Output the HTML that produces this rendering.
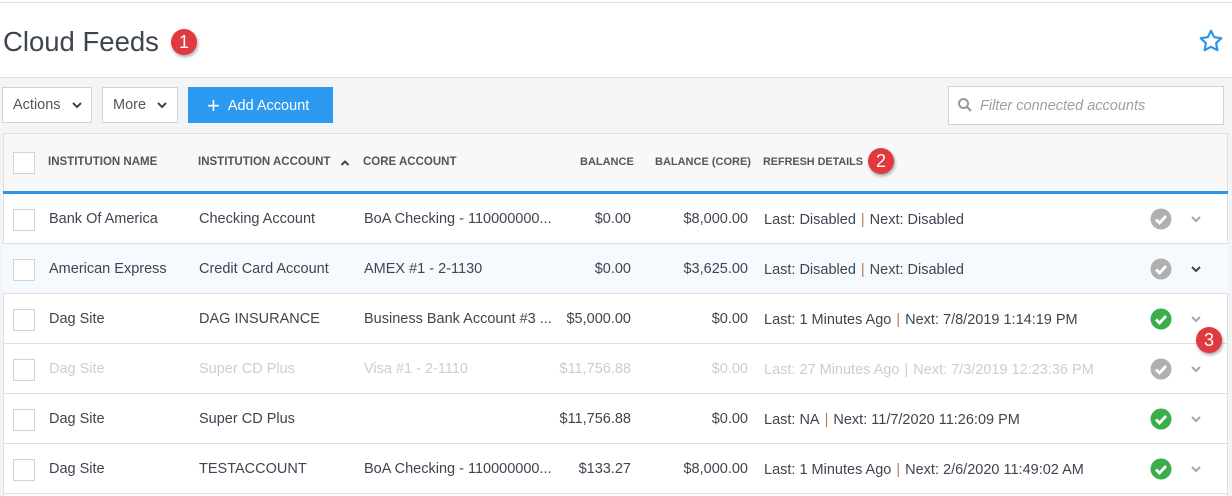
<!DOCTYPE html>
<html><head><meta charset="utf-8"><style>
*{margin:0;padding:0;box-sizing:border-box}
body{width:1232px;height:496px;overflow:hidden;background:#fff;font-family:"Liberation Sans",sans-serif;color:#3d4550;position:relative}
.a{position:absolute;white-space:nowrap}
.badge{position:absolute;width:26px;height:26px;border-radius:50%;background:#e0393e;color:#fff;font-size:18px;text-align:center;line-height:26px;box-shadow:1px 2px 3px rgba(0,0,0,.35)}
.btn{position:absolute;top:87px;height:36px;border:1px solid #ccd3da;background:#fff;font-size:14.5px;color:#555;line-height:35px;padding-left:10px}
.hd{position:absolute;top:156px;font-size:11.5px;font-weight:bold;color:#555}
.row{position:absolute;left:3px;width:1225px;height:50px;border-bottom:1px solid #dde1e6}
.cell{position:absolute;top:17px;font-size:14.5px;white-space:nowrap}
.cb{position:absolute;left:10px;top:15px;width:22px;height:22px;border:1px solid #ccd3da;background:#fff}
.r{text-align:right}
.sep{color:#b77a55;margin:0 5px}
.dim{color:#c9ced4}
.dim .sep{color:#e8c6b2}
</style></head><body>
<div class="a" style="left:0;top:2px;width:1232px;height:1px;background:#dde1e6"></div>
<div class="a" style="left:3px;top:26px;font-size:27.5px;color:#3d4550">Cloud Feeds</div>
<div class="badge" style="left:171px;top:29px">1</div>
<svg class="a" style="left:1198px;top:28px" width="26" height="26" viewBox="0 0 24 24"><path d="M12 2.5l2.9 6 6.6.9-4.8 4.6 1.2 6.5L12 17.4 6.1 20.5l1.2-6.5L2.5 9.4l6.6-.9z" fill="none" stroke="#2b95e9" stroke-width="2" stroke-linejoin="round"/></svg>
<div class="a" style="left:0;top:77px;width:1232px;height:419px;background:#f3f4f6;border-top:1px solid #dde1e6"></div>
<div class="btn" style="left:2px;width:90px">Actions <svg width="12" height="8" style="margin-left:6px" viewBox="0 0 12 8"><path d="M2 2l4 4 4-4" fill="none" stroke="#444" stroke-width="2"/></svg></div>
<div class="btn" style="left:102px;width:76px">More <svg width="12" height="8" style="margin-left:6px" viewBox="0 0 12 8"><path d="M2 2l4 4 4-4" fill="none" stroke="#444" stroke-width="2"/></svg></div>
<div class="a" style="left:188px;top:87px;width:145px;height:36px;background:#2b9af0;color:#fff;font-size:14.5px;line-height:37px;padding-left:19px"><span style="font-size:22px;vertical-align:-3px;margin-right:8px">+</span>Add Account</div>
<div class="a" style="left:948px;top:86px;width:276px;height:39px;border:1px solid #ccd3da;background:#fff"></div>
<svg class="a" style="left:957px;top:97px" width="16" height="16" viewBox="0 0 16 16"><circle cx="6.5" cy="6.5" r="4.5" fill="none" stroke="#999" stroke-width="2"/><path d="M10 10l4 4" stroke="#999" stroke-width="2.2"/></svg>
<div class="a" style="left:980px;top:98px;font-size:14.5px;font-style:italic;color:#9aa0a6">Filter connected accounts</div>
<div class="a" style="left:3px;top:133px;width:1225px;height:363px;background:#fff;border:1px solid #dde1e6;border-bottom:none"></div>
<div class="a" style="left:4px;top:134px;width:1223px;height:58px;background:#f8f8f8"></div>
<div class="a" style="left:3px;top:191px;width:1225px;height:3px;background:#2b95e9"></div>
<div class="cb" style="left:13px;top:152px"></div>
<div class="hd" style="left:48px">INSTITUTION NAME</div>
<div class="hd" style="left:198px">INSTITUTION ACCOUNT</div>
<svg class="a" style="left:340px;top:159px" width="10" height="8" viewBox="0 0 10 8"><path d="M1.5 6l3.5-3.5 3.5 3.5" fill="none" stroke="#444" stroke-width="2"/></svg>
<div class="hd" style="left:363px">CORE ACCOUNT</div>
<div class="hd" style="left:580px;font-size:11px">BALANCE</div>
<div class="hd" style="left:655px;font-size:11px">BALANCE (CORE)</div>
<div class="hd" style="left:763px;font-size:10.8px">REFRESH DETAILS</div>
<div class="badge" style="left:868px;top:148px">2</div>

<div class="row" style="top:194px"><div class="cb"></div><div class="cell" style="left:46px">Bank Of America</div><div class="cell" style="left:196px">Checking Account</div><div class="cell" style="left:361px">BoA Checking - 110000000...</div><div class="cell r" style="right:597px">$0.00</div><div class="cell r" style="right:480px">$8,000.00</div><div class="cell" style="left:761px;top:18px">Last: Disabled<span class="sep">|</span>Next: Disabled</div></div>
<div class="row" style="top:244px;background:#f5fafe"><div class="cb"></div><div class="cell" style="left:46px">American Express</div><div class="cell" style="left:196px">Credit Card Account</div><div class="cell" style="left:361px">AMEX #1 - 2-1130</div><div class="cell r" style="right:597px">$0.00</div><div class="cell r" style="right:480px">$3,625.00</div><div class="cell" style="left:761px;top:18px">Last: Disabled<span class="sep">|</span>Next: Disabled</div></div>
<div class="row" style="top:294px"><div class="cb"></div><div class="cell" style="left:46px">Dag Site</div><div class="cell" style="left:196px">DAG INSURANCE</div><div class="cell" style="left:361px">Business Bank Account #3 ...</div><div class="cell r" style="right:597px">$5,000.00</div><div class="cell r" style="right:480px">$0.00</div><div class="cell" style="left:761px;top:18px">Last: 1 Minutes Ago<span class="sep">|</span>Next: 7/8/2019 1:14:19 PM</div></div>
<div class="row dim" style="top:344px"><div class="cb"></div><div class="cell" style="left:46px">Dag Site</div><div class="cell" style="left:196px">Super CD Plus</div><div class="cell" style="left:361px">Visa #1 - 2-1110</div><div class="cell r" style="right:597px">$11,756.88</div><div class="cell r" style="right:480px">$0.00</div><div class="cell" style="left:761px;top:18px">Last: 27 Minutes Ago<span class="sep">|</span>Next: 7/3/2019 12:23:36 PM</div></div>
<div class="row" style="top:394px"><div class="cb"></div><div class="cell" style="left:46px">Dag Site</div><div class="cell" style="left:196px">Super CD Plus</div><div class="cell r" style="right:597px">$11,756.88</div><div class="cell r" style="right:480px">$0.00</div><div class="cell" style="left:761px;top:18px">Last: NA<span class="sep">|</span>Next: 11/7/2020 11:26:09 PM</div></div>
<div class="row" style="top:444px"><div class="cb"></div><div class="cell" style="left:46px">Dag Site</div><div class="cell" style="left:196px">TESTACCOUNT</div><div class="cell" style="left:361px">BoA Checking - 110000000...</div><div class="cell r" style="right:597px">$133.27</div><div class="cell r" style="right:480px">$8,000.00</div><div class="cell" style="left:761px;top:18px">Last: 1 Minutes Ago<span class="sep">|</span>Next: 2/6/2020 11:49:02 AM</div></div>

<svg class="a" style="left:1150px;top:208px" width="22" height="22" viewBox="0 0 22 22"><circle cx="11" cy="11" r="10.5" fill="#b0b0b0"/><path d="M6 11.5l3.5 3.5 6.5-7" fill="none" stroke="#fff" stroke-width="2.8"/></svg>
<svg class="a" style="left:1150px;top:258px" width="22" height="22" viewBox="0 0 22 22"><circle cx="11" cy="11" r="10.5" fill="#b0b0b0"/><path d="M6 11.5l3.5 3.5 6.5-7" fill="none" stroke="#fff" stroke-width="2.8"/></svg>
<svg class="a" style="left:1150px;top:308px" width="22" height="22" viewBox="0 0 22 22"><circle cx="11" cy="11" r="10.5" fill="#3aae4a"/><path d="M6 11.5l3.5 3.5 6.5-7" fill="none" stroke="#fff" stroke-width="2.8"/></svg>
<svg class="a" style="left:1150px;top:358px" width="22" height="22" viewBox="0 0 22 22"><circle cx="11" cy="11" r="10.5" fill="#b0b0b0"/><path d="M6 11.5l3.5 3.5 6.5-7" fill="none" stroke="#fff" stroke-width="2.8"/></svg>
<svg class="a" style="left:1150px;top:408px" width="22" height="22" viewBox="0 0 22 22"><circle cx="11" cy="11" r="10.5" fill="#3aae4a"/><path d="M6 11.5l3.5 3.5 6.5-7" fill="none" stroke="#fff" stroke-width="2.8"/></svg>
<svg class="a" style="left:1150px;top:458px" width="22" height="22" viewBox="0 0 22 22"><circle cx="11" cy="11" r="10.5" fill="#3aae4a"/><path d="M6 11.5l3.5 3.5 6.5-7" fill="none" stroke="#fff" stroke-width="2.8"/></svg>

<svg class="a" style="left:1190px;top:215px" width="12" height="8" viewBox="0 0 12 8"><path d="M2 2l4 4 4-4" fill="none" stroke="#a0a8b0" stroke-width="2"/></svg>
<svg class="a" style="left:1190px;top:265px" width="12" height="8" viewBox="0 0 12 8"><path d="M2 2l4 4 4-4" fill="none" stroke="#3d4550" stroke-width="2"/></svg>
<svg class="a" style="left:1190px;top:315px" width="12" height="8" viewBox="0 0 12 8"><path d="M2 2l4 4 4-4" fill="none" stroke="#a0a8b0" stroke-width="2"/></svg>
<svg class="a" style="left:1190px;top:365px" width="12" height="8" viewBox="0 0 12 8"><path d="M2 2l4 4 4-4" fill="none" stroke="#a0a8b0" stroke-width="2"/></svg>
<svg class="a" style="left:1190px;top:415px" width="12" height="8" viewBox="0 0 12 8"><path d="M2 2l4 4 4-4" fill="none" stroke="#a0a8b0" stroke-width="2"/></svg>
<svg class="a" style="left:1190px;top:465px" width="12" height="8" viewBox="0 0 12 8"><path d="M2 2l4 4 4-4" fill="none" stroke="#a0a8b0" stroke-width="2"/></svg>
<div class="badge" style="left:1196px;top:327px">3</div>
</body></html>
